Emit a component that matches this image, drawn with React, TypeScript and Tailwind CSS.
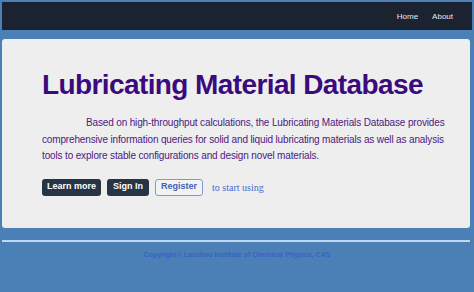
import React from "react";

export default function App() {
  return (
    <div className="w-[474px] h-[292px] bg-[#4a80b5] overflow-hidden pt-[2px] px-[2px] flex flex-col" style={{ fontFamily: '"Liberation Sans", Arial, sans-serif' }}>
      <nav className="h-[28px] shrink-0 bg-[#1b2230] flex items-center justify-end pr-[19px] gap-[14px] text-[8px] text-[#e8e8e8]">
        <span className="translate-y-[1px]">Home</span>
        <span className="translate-y-[1px]">About</span>
      </nav>
      <main className="shrink-0 mt-[9px] mr-[2px] h-[189px] bg-[#eeeeee] rounded-[3px] pl-[40px] pr-[14px] pt-[28px]">
        <h1 className="text-[28px] leading-[36px] font-bold text-[#3b0a7d] tracking-[-0.6px] whitespace-nowrap">Lubricating Material Database</h1>
        <p className="mt-[12px] text-[10px] leading-[16.5px] tracking-[-0.15px] text-[#4b1a80] indent-[44px]">
          Based on high-throughput calculations, the Lubricating Materials Database provides comprehensive information queries for solid and liquid lubricating materials as well as analysis tools to explore stable configurations and design novel materials.
        </p>
        <div className="mt-[14px] flex items-center gap-[6px] text-[9px] font-bold">
          <button className="h-[17px] px-[5px] rounded-[3px] bg-[#263445] text-white">Learn more</button>
          <button className="h-[17px] px-[6px] rounded-[3px] bg-[#263445] text-white">Sign In</button>
          <button className="h-[17px] px-[5px] rounded-[3px] border border-[#7b9ad6] text-[#3f62b8] bg-[#f2f2f2]">Register</button>
          <span className="ml-[3px] text-[10px] font-normal text-[#4a6cc8]" style={{ fontFamily: '"Liberation Serif", "Times New Roman", serif' }}>to start using</span>
        </div>
      </main>
      <div className="shrink-0 mt-[12px] mr-[2px] h-[2px] bg-[#bcd8f2]"></div>
      <footer className="flex-1 flex justify-center pt-[8px] text-[7px] text-[#3b62c4] font-bold">
        Copyright© Lanzhou Institute of Chemical Physics, CAS
      </footer>
    </div>
  );
}
